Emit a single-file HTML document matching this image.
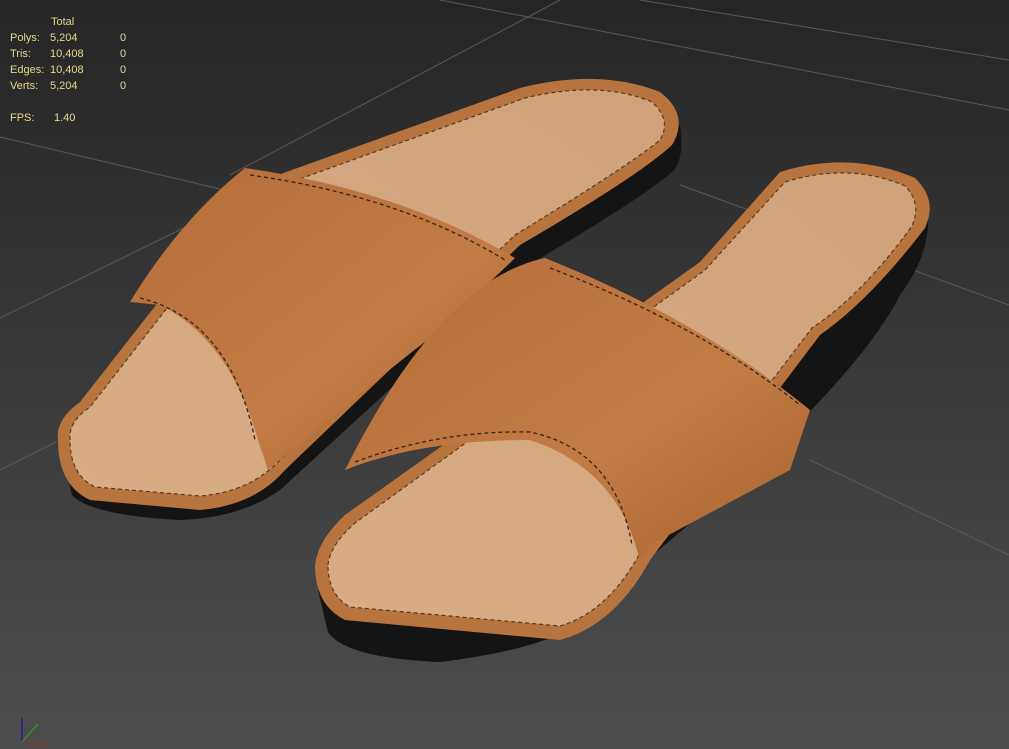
<!DOCTYPE html><html><head><style>
html,body{margin:0;padding:0;width:1009px;height:749px;overflow:hidden;background:#333}
.t{position:absolute;font:11px "Liberation Sans",sans-serif;color:#e6d98a}
</style></head><body>
<svg width="1009" height="749" style="position:absolute;left:0;top:0">
<defs>
<linearGradient id="bg" x1="0" y1="0" x2="0" y2="1"><stop offset="0" stop-color="#262626"/><stop offset="1" stop-color="#4d4d4d"/></linearGradient>
<linearGradient id="lth" x1="0" y1="0" x2="1" y2="1"><stop offset="0" stop-color="#b56e3a"/><stop offset=".6" stop-color="#c27b45"/><stop offset="1" stop-color="#a8622f"/></linearGradient>
<linearGradient id="ins" x1="0" y1="1" x2="1" y2="0"><stop offset="0" stop-color="#d8ad84"/><stop offset="1" stop-color="#cfa27a"/></linearGradient>
</defs>
<rect width="1009" height="749" fill="url(#bg)"/>
<g stroke="#5a5a5a" stroke-width="1" fill="none">
<line x1="0" y1="137" x2="330" y2="215"/><line x1="440" y1="0" x2="1009" y2="110"/><line x1="640" y1="0" x2="1009" y2="60"/>
<line x1="680" y1="185" x2="1009" y2="305"/><line x1="810" y1="460" x2="1009" y2="555"/><line x1="0" y1="318" x2="200" y2="220"/>
<line x1="230" y1="175" x2="560" y2="0"/><line x1="0" y1="470" x2="60" y2="440"/>
</g>
<path d="M62,450 L72,495 Q90,515 180,520 Q240,518 280,490 L520,270 Q640,200 672,172 Q685,160 680,125 L600,130 Z" fill="#141414"/>
<path d="M58,440 Q55,420 80,402 L250,185 L520,88 Q600,68 660,92 Q690,115 672,145 Q640,175 520,245 L285,470 Q255,505 200,510 L90,500 Q58,485 58,440Z" fill="#b8743e"/>
<path d="M70,440 Q68,422 90,407 L255,195 L525,98 Q600,80 652,102 Q672,120 660,140 Q630,165 515,235 L280,460 Q250,492 200,496 L95,487 Q70,475 70,440Z" fill="url(#ins)" stroke="#5a3a20" stroke-dasharray="4 3" stroke-width="1.2"/>
<path d="M245,168 Q400,190 515,258 L440,330 Q350,400 268,470 L258,440 Q230,340 160,305 L130,302 Q180,220 245,168Z" fill="url(#lth)"/>
<path d="M250,175 Q400,196 505,260 M140,298 Q230,320 255,440" stroke="#3a2414" stroke-dasharray="4 3" fill="none" stroke-width="1.3"/>
<path d="M318,590 L328,632 Q345,658 440,662 Q520,652 560,634 L700,515 Q860,375 900,295 Q930,255 928,215 L850,230 Z" fill="#141414"/>
<path d="M315,565 Q318,540 345,515 L700,262 L780,172 Q850,150 915,178 Q938,200 925,228 Q870,300 820,335 L650,560 Q615,625 560,640 L345,620 Q315,605 315,565Z" fill="#b8743e"/>
<path d="M328,565 Q330,545 355,523 L705,270 L785,182 Q850,162 905,186 Q922,203 912,226 Q862,295 812,328 L640,553 Q608,612 560,626 L350,607 Q328,595 328,565Z" fill="url(#ins)" stroke="#5a3a20" stroke-dasharray="4 3" stroke-width="1.2"/>
<path d="M345,470 Q440,280 545,258 Q700,320 810,410 L790,470 L650,545 L640,562 Q620,470 530,440 Q420,440 345,470Z" fill="url(#lth)"/>
<path d="M355,462 Q440,430 530,432 Q615,450 632,545 M550,268 Q700,325 800,405" stroke="#3a2414" stroke-dasharray="4 3" fill="none" stroke-width="1.3"/>
<line x1="22" y1="742" x2="22" y2="718" stroke="#2a2a7a" stroke-width="2"/>
<line x1="22" y1="742" x2="38" y2="724" stroke="#3a8a3a" stroke-width="1.5"/>
<line x1="22" y1="742" x2="48" y2="746" stroke="#8a3030" stroke-width="1.5"/>
</svg>
<div class="t" style="left:51px;top:16px">Total</div>
<div class="t" style="left:10px;top:32px">Polys:</div><div class="t" style="left:50px;top:32px">5,204</div><div class="t" style="left:120px;top:32px">0</div>
<div class="t" style="left:10px;top:48px">Tris:</div><div class="t" style="left:50px;top:48px">10,408</div><div class="t" style="left:120px;top:48px">0</div>
<div class="t" style="left:10px;top:64px">Edges:</div><div class="t" style="left:50px;top:64px">10,408</div><div class="t" style="left:120px;top:64px">0</div>
<div class="t" style="left:10px;top:80px">Verts:</div><div class="t" style="left:50px;top:80px">5,204</div><div class="t" style="left:120px;top:80px">0</div>
<div class="t" style="left:10px;top:112px">FPS:</div><div class="t" style="left:54px;top:112px">1.40</div>
</body></html>
